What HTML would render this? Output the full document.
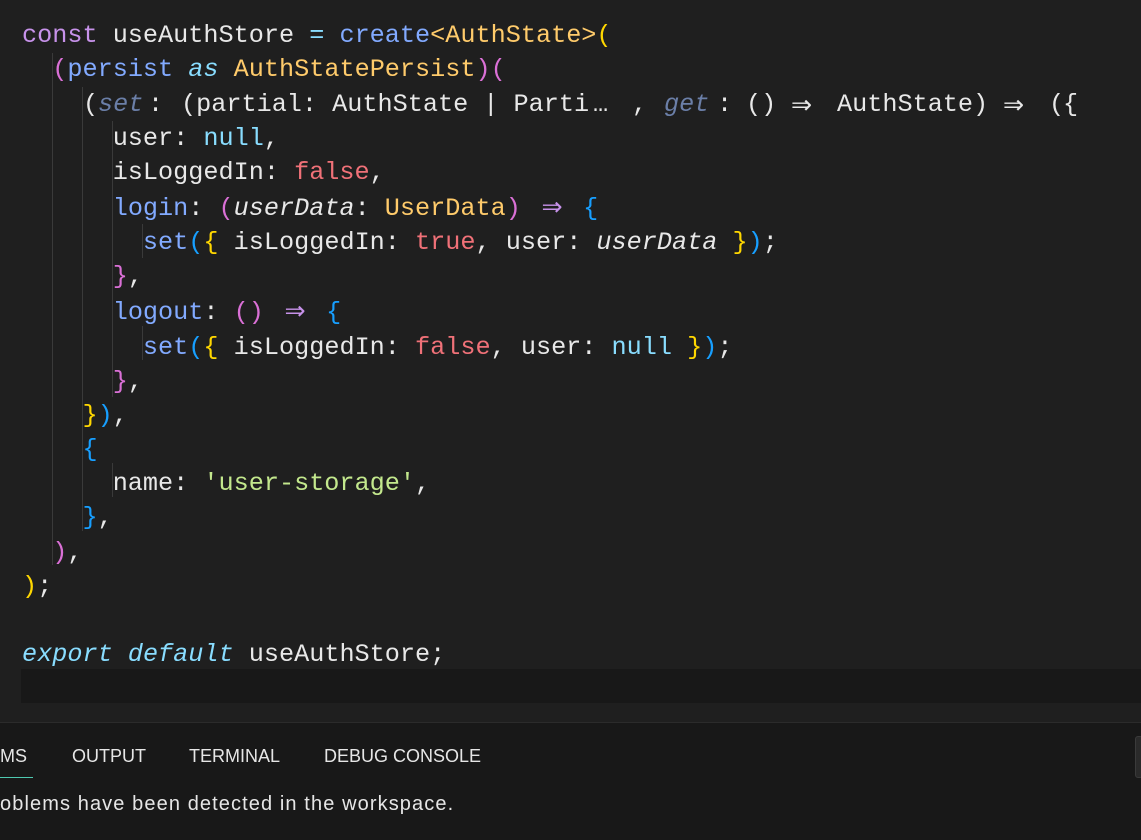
<!DOCTYPE html>
<html><head><meta charset="utf-8"><style>
html,body{margin:0;padding:0;}
body{width:1141px;height:839px;background:#1f1f1f;position:relative;overflow:hidden;font-family:"Liberation Mono",monospace;}
.code{position:absolute;left:22px;top:19px;margin:0;font-size:25.2px;line-height:34.17px;color:#e8e8e8;white-space:pre;}
.k{color:#c792ea}.f{color:#82aaff}.t{color:#ffcb6b}.c{color:#89ddff}.i{font-style:italic}
.g{color:#ffd700}.o{color:#da70d6}.b{color:#179fff}.r{color:#f07178}.s{color:#c3e88d}.w{color:#e8e8e8}
.ar{display:inline-block;width:2ch;text-align:center;font-family:"DejaVu Sans",sans-serif;}
.guide{position:absolute;width:1px;background:#3a3a3a;}
.l3{position:absolute;top:88px;font-size:25.2px;line-height:34px;color:#e8e8e8;white-space:pre;}
.hint{color:#6b7fa8;font-style:italic}
.panel{position:absolute;left:0;top:722px;width:1141px;height:117px;background:#181818;border-top:1px solid #2b2b2b;font-family:"Liberation Sans",sans-serif;color:#e6e6e6;font-size:18px;}
.tab{position:absolute;top:23px;}
</style></head><body>
<div style="position:absolute;left:21px;top:669px;width:1120px;height:34px;background:#181818"></div>
<div class="guide" style="left:52px;top:53px;height:512px"></div>
<div class="guide" style="left:82px;top:87px;height:444px"></div>
<div class="guide" style="left:112px;top:121px;height:276px"></div>
<div class="guide" style="left:112px;top:463px;height:34px"></div>
<div class="guide" style="left:142px;top:224px;height:34px"></div>
<div class="guide" style="left:142px;top:326px;height:34px"></div>
<pre class="code"><span class="k">const</span> useAuthStore <span class="c">=</span> <span class="f">create</span><span class="t">&lt;AuthState&gt;</span><span class="g">(</span>
  <span class="o">(</span><span class="f">persist</span> <span class="c i">as</span> <span class="t">AuthStatePersist</span><span class="o">)(</span>

      user: <span class="c">null</span>,
      isLoggedIn: <span class="r">false</span>,
      <span class="f">login</span>: <span class="o">(</span><span class="i">userData</span>: <span class="t">UserData</span><span class="o">)</span> <span class="ar k">⇒</span> <span class="b">{</span>
        <span class="f">set</span><span class="b">(</span><span class="g">{</span> isLoggedIn: <span class="r">true</span>, user: <span class="i">userData</span> <span class="g">}</span><span class="b">)</span>;
      <span class="o">}</span>,
      <span class="f">logout</span>: <span class="o">()</span> <span class="ar k">⇒</span> <span class="b">{</span>
        <span class="f">set</span><span class="b">(</span><span class="g">{</span> isLoggedIn: <span class="r">false</span>, user: <span class="c">null</span> <span class="g">}</span><span class="b">)</span>;
      <span class="o">}</span>,
    <span class="g">}</span><span class="b">)</span>,
    <span class="b">{</span>
      name: <span class="s">'user-storage'</span>,
    <span class="b">}</span>,
  <span class="o">)</span>,
<span class="g">)</span>;

<span class="c i">export</span> <span class="c i">default</span> useAuthStore;</pre>
<div class="l3 b" style="left:83px">(</div>
<div class="l3 hint" style="left:98px">set</div>
<div class="l3" style="left:148px">:</div>
<div class="l3" style="left:181px">(partial: AuthState | Parti</div>
<div class="l3" style="left:593px">…</div>
<div class="l3 b" style="left:632px">,</div>
<div class="l3 hint" style="left:664px">get</div>
<div class="l3" style="left:717px">:</div>
<div class="l3" style="left:746px">()</div>
<div class="l3" style="left:791px;font-family:'DejaVu Sans',sans-serif">⇒</div>
<div class="l3" style="left:837px">AuthState</div>
<div class="l3 b" style="left:973px">)</div>
<div class="l3 k" style="left:1003px;font-family:'DejaVu Sans',sans-serif">⇒</div>
<div class="l3 b" style="left:1049px">(</div>
<div class="l3 g" style="left:1063px">{</div>
<div class="panel">
  <div class="tab" style="left:0">MS</div>
  <div style="position:absolute;left:0;top:54px;width:33px;height:1px;background:#4ec9b0"></div>
  <div class="tab" style="left:72px">OUTPUT</div>
  <div class="tab" style="left:189px">TERMINAL</div>
  <div class="tab" style="left:324px">DEBUG CONSOLE</div>
  <div style="position:absolute;left:0;top:70px;font-size:20px;letter-spacing:1.1px">oblems have been detected in the workspace.</div>
  <div style="position:absolute;left:1135px;top:13px;width:6px;height:40px;background:#2a2a2a;border:1px solid #3a3a3a;border-radius:3px"></div>
</div>
</body></html>
